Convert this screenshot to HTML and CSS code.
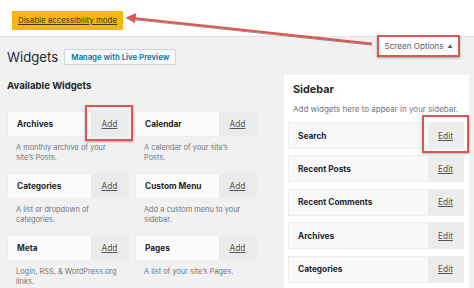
FILE: index.html
```html
<!DOCTYPE html>
<html lang="en">
<head>
<meta charset="utf-8">
<title>Widgets</title>
<link rel="stylesheet" href="styles.css">
</head>
<body>
<div class="page">
  <div class="notice">
    <a class="a11y-btn" href="#">Disable accessibility mode</a>
  </div>
  <div class="screen-meta">
    <span class="screen-options hl">Screen Options <span class="caret">&#9650;</span></span>
  </div>
  <div class="title-row">
    <h1 class="page-title">Widgets</h1>
    <a class="live-btn" href="#">Manage with Live Preview</a>
  </div>
  <div class="main">
    <section class="available">
      <h2 class="section-title">Available Widgets</h2>
      <div class="grid">
        <div class="item">
          <div class="wrow"><span class="wtitle">Archives</span><span class="wact hl-add"><a href="#">Add</a></span></div>
          <p class="wdesc">A monthly archive of your site’s Posts.</p>
        </div>
        <div class="item">
          <div class="wrow"><span class="wtitle">Calendar</span><span class="wact"><a href="#">Add</a></span></div>
          <p class="wdesc">A calendar of your site’s Posts.</p>
        </div>
        <div class="item">
          <div class="wrow"><span class="wtitle">Categories</span><span class="wact"><a href="#">Add</a></span></div>
          <p class="wdesc">A list or dropdown of categories.</p>
        </div>
        <div class="item">
          <div class="wrow"><span class="wtitle">Custom Menu</span><span class="wact"><a href="#">Add</a></span></div>
          <p class="wdesc">Add a custom menu to your sidebar.</p>
        </div>
        <div class="item">
          <div class="wrow"><span class="wtitle">Meta</span><span class="wact"><a href="#">Add</a></span></div>
          <p class="wdesc">Login, RSS, &amp; WordPress.org links.</p>
        </div>
        <div class="item">
          <div class="wrow"><span class="wtitle">Pages</span><span class="wact"><a href="#">Add</a></span></div>
          <p class="wdesc">A list of your site’s Pages.</p>
        </div>
      </div>
    </section>
    <section class="sidebar">
      <h3 class="sb-title">Sidebar</h3>
      <p class="sb-desc">Add widgets here to appear in your sidebar.</p>
      <div class="sb-list">
        <div class="srow"><span class="stitle">Search</span><span class="sact hl-edit"><a href="#">Edit</a></span></div>
        <div class="srow"><span class="stitle">Recent Posts</span><span class="sact"><a href="#">Edit</a></span></div>
        <div class="srow"><span class="stitle">Recent Comments</span><span class="sact"><a href="#">Edit</a></span></div>
        <div class="srow"><span class="stitle">Archives</span><span class="sact"><a href="#">Edit</a></span></div>
        <div class="srow"><span class="stitle">Categories</span><span class="sact"><a href="#">Edit</a></span></div>
      </div>
    </section>
  </div>
  <svg class="arrow" width="474" height="60" viewBox="0 0 474 60">
    <defs>
      <filter id="sh" x="-5%" y="-50%" width="110%" height="200%">
        <feDropShadow dx="0" dy="1" stdDeviation="0.6" flood-color="#000" flood-opacity="0.45"/>
      </filter>
    </defs>
    <g filter="url(#sh)">
      <line x1="371" y1="43.5" x2="133" y2="18" stroke="#de5550" stroke-width="2.2" stroke-linecap="round"/>
      <polygon points="126,17.2 136,13.2 135,22.4" fill="#de5550"/>
    </g>
  </svg>
</div>
</body>
</html>
```

FILE: styles.css
```css
* { box-sizing: border-box; }
html, body { margin: 0; padding: 0; }
body {
  background: #f1f1f1;
  font-family: Inter, "Liberation Sans", Arial, sans-serif;
  color: #23282d;
  width: 474px;
  height: 288px;
  overflow: hidden;
}
.page { position: relative; width: 474px; height: 288px; overflow: hidden; }

.notice {
  background: #fff;
  height: 37px;
  padding: 7px 0 0 12px;
  border-bottom: 1px solid #e2e2e2;
}
.a11y-btn {
  display: inline-flex;
  align-items: center;
  justify-content: center;
  width: 111px;
  height: 19px;
  background: #f6b800;
  color: #3a3a1e;
  font-size: 7.9px;
  text-decoration: underline;
}

.screen-meta {
  height: 0;
  display: flex;
  justify-content: flex-end;
  padding-right: 14px;
  margin-top: -2px;
}
.screen-options {
  display: flex;
  align-items: center;
  justify-content: center;
  gap: 4px;
  width: 83px;
  height: 22px;
  flex: none;
  background: #fff;
  color: #555d66;
  font-size: 8.1px;
}
.hl { border: 2px solid #de5550; box-shadow: 0 1px 2px rgba(0,0,0,0.35); }
.caret { font-size: 5px; color: #555; }

.title-row {
  display: flex;
  align-items: center;
  gap: 6px;
  margin-top: 14px;
  padding-left: 7px;
  height: 16px;
}
.page-title {
  margin: 0;
  font-size: 13.2px;
  font-weight: 400;
  line-height: 16px;
  color: #23282d;
}
.live-btn {
  display: inline-flex;
  align-items: center;
  justify-content: center;
  width: 112px;
  height: 16px;
  background: #f9f9f9;
  border: 1px solid #ccd8e0;
  color: #0073aa;
  font-size: 7.8px;
  font-weight: 600;
  text-decoration: none;
}

.main {
  display: flex;
  align-items: flex-start;
  gap: 27px;
  margin-top: 10px;
  padding-left: 7px;
}
.available { width: 250px; flex: none; }
.section-title {
  margin: 4px 0 18px;
  font-size: 9.6px;
  font-weight: 700;
  line-height: 14px;
}
.grid {
  display: grid;
  grid-template-columns: 122px 122px;
  column-gap: 6px;
}
.wrow {
  display: flex;
  height: 26px;
  background: #fbfbfb;
  border: 1px solid #ececec;
}
.wtitle {
  flex: 1;
  display: flex;
  align-items: center;
  padding-left: 9px;
  font-size: 8.3px;
  font-weight: 700;
  color: #23282d;
}
.wact {
  width: 37px;
  flex: none;
  display: flex;
  align-items: center;
  justify-content: center;
  background: #ebebeb;
  position: relative;
}
.wact a, .sact a {
  color: #555;
  font-size: 8.3px;
  text-decoration: underline;
}
.hl-add::after, .hl-edit::after {
  content: "";
  position: absolute;
  border: 2px solid #de5550;
  box-shadow: 0 1px 2px rgba(0,0,0,0.3);
}
.hl-add::after { left: -6px; right: -5px; top: -7px; bottom: -5px; }
.wdesc {
  margin: 6px 0 10px;
  padding: 0 10px 0 9px;
  font-size: 7.4px;
  line-height: 10px;
  color: #72777c;
}

.sidebar {
  width: 185px;
  flex: none;
  height: 220px;
  background: #fff;
  padding: 8px 5px 0 4px;
}
.sb-title {
  margin: 0;
  padding-left: 5px;
  font-size: 10.8px;
  font-weight: 700;
  line-height: 14px;
}
.sb-desc {
  margin: 7px 0 8px;
  padding-left: 5px;
  font-size: 8px;
  line-height: 10px;
  color: #72777c;
}
.sb-list { display: flex; flex-direction: column; gap: 6.4px; }
.srow {
  display: flex;
  height: 27px;
  background: #f8f8f8;
  border: 1px solid #eeeeee;
}
.stitle {
  flex: 1;
  display: flex;
  align-items: center;
  padding-left: 9px;
  font-size: 8.3px;
  font-weight: 700;
}
.sact {
  width: 35px;
  flex: none;
  display: flex;
  align-items: center;
  justify-content: center;
  background: #ececec;
  position: relative;
}
.hl-edit::after { left: -6px; right: -6px; top: -8px; bottom: -5px; }

.arrow { position: absolute; left: 0; top: 0; pointer-events: none; }
```
